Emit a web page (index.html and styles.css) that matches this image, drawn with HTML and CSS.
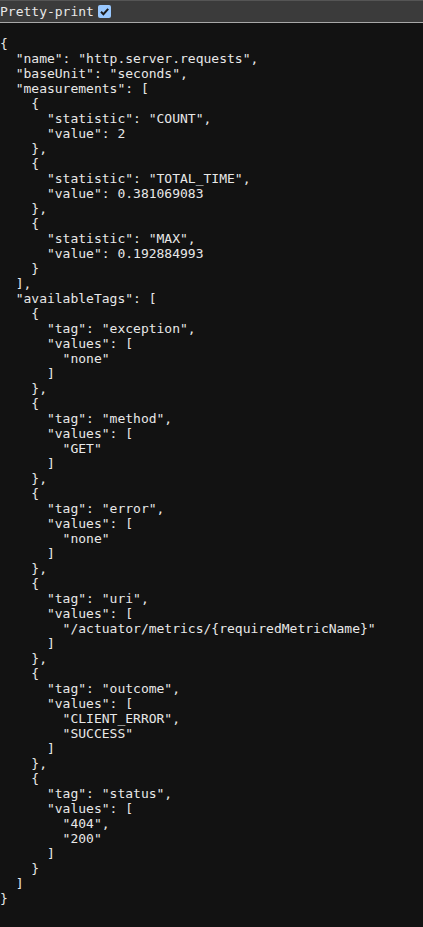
FILE: index.html
```html
<!DOCTYPE html>
<html>
<head>
<meta charset="utf-8">
<link rel="stylesheet" href="styles.css">
</head>
<body>
<div class="bar"><label class="pp">Pretty-print<span class="cb"><svg width="13" height="13" viewBox="0 0 13 13"><path d="M3 6.8 L5.4 9.2 L10.2 3.8" fill="none" stroke="#1b1b1b" stroke-width="2"/></svg></span></label></div>
<pre class="json">{
  "name": "http.server.requests",
  "baseUnit": "seconds",
  "measurements": [
    {
      "statistic": "COUNT",
      "value": 2
    },
    {
      "statistic": "TOTAL_TIME",
      "value": 0.381069083
    },
    {
      "statistic": "MAX",
      "value": 0.192884993
    }
  ],
  "availableTags": [
    {
      "tag": "exception",
      "values": [
        "none"
      ]
    },
    {
      "tag": "method",
      "values": [
        "GET"
      ]
    },
    {
      "tag": "error",
      "values": [
        "none"
      ]
    },
    {
      "tag": "uri",
      "values": [
        "/actuator/metrics/{requiredMetricName}"
      ]
    },
    {
      "tag": "outcome",
      "values": [
        "CLIENT_ERROR",
        "SUCCESS"
      ]
    },
    {
      "tag": "status",
      "values": [
        "404",
        "200"
      ]
    }
  ]
}</pre>
</body>
</html>
```
FILE: styles.css
```css
html, body {
  margin: 0;
  padding: 0;
  background: #121212;
  color: #e8e8e8;
  font-family: "DejaVu Sans Mono", monospace;
  font-size: 13px;
}
.bar {
  height: 21px;
  background: #3b3b3b;
  border-top: 1px solid #555;
  border-bottom: 1px solid #a8a8a8;
  box-sizing: content-box;
  display: flex;
  align-items: center;
}
.pp {
  display: flex;
  align-items: center;
  line-height: 15px;
  color: #e8e8e8;
}
.cb {
  display: inline-flex;
  width: 13px;
  height: 13px;
  margin: 0 3px 0 4px;
  background: #99c8ff;
  border-radius: 2px;
}
.json {
  margin: 13px 0 0 0;
  font-family: "DejaVu Sans Mono", monospace;
  font-size: 13px;
  line-height: 15px;
  white-space: pre;
}
```
